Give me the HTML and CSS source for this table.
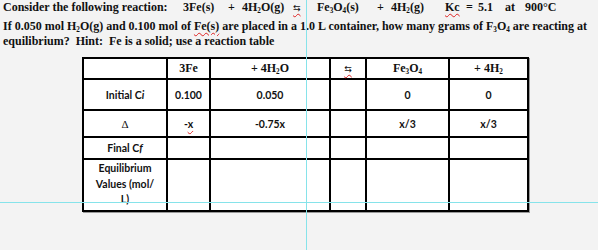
FILE: index.html
```html
<!DOCTYPE html>
<html>
<head>
<meta charset="utf-8">
<link rel="stylesheet" href="styles.css">
</head>
<body>
<div class="page">
  <div class="question">
    <div class="line1">
      <span class="w-lead">Consider the following reaction:</span>
      <span class="w-fe">3Fe(s)</span>
      <span class="w-plus1">+</span>
      <span class="w-h2o">4H<sub>2</sub>O(g)</span>
      <span class="w-arrow"><span class="eq">&#8646;</span></span>
      <span class="w-fe3o4">Fe<sub>3</sub>O<sub>4</sub>(s)</span>
      <span class="w-plus2">+</span>
      <span class="w-h2">4H<sub>2</sub>(g)</span>
      <span class="w-kc"><span class="squig">Kc</span></span>
      <span class="w-eq">=</span>
      <span class="w-val">5.1</span>
      <span class="w-at">at</span>
      <span class="w-temp">900&deg;C</span>
    </div>
    <p class="line2">If 0.050 mol H<sub>2</sub>O(g) and 0.100 mol of <span class="squig">Fe(s)</span> are placed in a 1.0 L container, how many grams of F<sub>3</sub>O<sub>4</sub> are reacting at<br>equilibrium?&nbsp; Hint:&nbsp; Fe is a solid; use a reaction table</p>
  </div>
  <table class="ice">
    <colgroup>
      <col class="c1"><col class="c2"><col class="c3"><col class="c4"><col class="c5"><col class="c6">
    </colgroup>
    <tr class="r-head">
      <td></td>
      <td class="serif">3Fe</td>
      <td class="serif">+ 4H<sub>2</sub>O</td>
      <td class="serif"><span class="eq">&#8646;</span></td>
      <td class="serif">Fe<sub>3</sub>O<sub>4</sub></td>
      <td class="serif">+ 4H<sub>2</sub></td>
    </tr>
    <tr class="r-init">
      <td>Initial C<i>i</i></td>
      <td>0.100</td>
      <td>0.050</td>
      <td></td>
      <td>0</td>
      <td>0</td>
    </tr>
    <tr class="r-delta">
      <td class="serif delta">&Delta;</td>
      <td>-<span class="squig">x</span></td>
      <td>-0.75x</td>
      <td></td>
      <td>x/3</td>
      <td>x/3</td>
    </tr>
    <tr class="r-final">
      <td>Final C<i>f</i></td>
      <td></td><td></td><td></td><td></td><td></td>
    </tr>
    <tr class="r-eq">
      <td class="multi">Equilibrium Values (mol/ L)</td>
      <td></td><td></td><td></td><td></td><td></td>
    </tr>
  </table>
  <div class="guide-v"></div>
  <div class="guide-h"></div>
</div>
</body>
</html>
```

FILE: styles.css
```css
html, body {
  margin: 0;
  padding: 0;
  background: #f3f3f3;
}
.page {
  position: relative;
  width: 598px;
  height: 250px;
  overflow: hidden;
  font-family: "Liberation Serif", "Times New Roman", serif;
  font-weight: bold;
  font-size: 12px;
  color: #111;
}
.question {
  padding: 0 0 0 3px;
}
.line1 {
  display: flex;
  align-items: baseline;
  height: 14px;
  line-height: 14px;
  white-space: nowrap;
}
.line1 > span {
  flex: none;
  display: inline-block;
}
.line1 sub, .line2 sub, .ice sub {
  font-size: 0.6em;
  vertical-align: -0.25em;
  line-height: 0;
}
.w-lead { width: 180px; }
.w-fe { width: 45px; }
.w-plus1 { width: 14px; }
.w-h2o { width: 51px; }
.w-arrow { width: 24px; }
.w-fe3o4 { width: 60px; }
.w-plus2 { width: 14px; }
.w-h2 { width: 54px; }
.w-kc { width: 21px; }
.w-eq { width: 12px; }
.w-val { width: 27px; }
.w-at { width: 20px; }
.w-temp { width: 40px; }
.eq {
  font-family: "DejaVu Sans", sans-serif;
  font-weight: normal;
  font-size: 9px;
  text-decoration: underline wavy #d22;
  text-decoration-thickness: 1px;
  text-underline-offset: 2px;
}
.squig {
  text-decoration: underline wavy #d22;
  text-decoration-thickness: 1px;
  text-underline-offset: 2px;
}
.line2 {
  margin: 5px 0 0 0;
  line-height: 15px;
  white-space: nowrap;
}
.ice {
  border-collapse: collapse;
  table-layout: fixed;
  margin: 8px 0 0 82px;
  width: 446px;
  background: #fff;
  font-family: Lato, "Open Sans", sans-serif;
  font-weight: bold;
  font-size: 10.5px;
  color: #111;
  box-shadow: 1px 1px 0 #999;
}
.ice td {
  border: 2px solid #000;
  text-align: center;
  vertical-align: middle;
  padding: 0 3px;
}
.ice td.serif {
  font-family: "Liberation Serif", "Times New Roman", serif;
  font-size: 12px;
}
.ice td.delta {
  font-weight: normal;
  font-size: 11px;
}
.c1 { width: 84px; }
.c2 { width: 43px; }
.c3 { width: 120px; }
.c4 { width: 36px; }
.c5 { width: 83px; }
.c6 { width: 79px; }
.r-head td { height: 19px; }
.r-init td { height: 29px; }
.r-delta td { height: 25px; }
.r-final td { height: 20px; }
.r-eq td { height: 49px; }
.ice td.multi {
  line-height: 15.5px;
  padding: 1px 10px 0;
  vertical-align: top;
}
.guide-v {
  position: absolute;
  left: 306px;
  top: 0;
  width: 1px;
  height: 250px;
  background: #86e3ea;
}
.guide-h {
  position: absolute;
  left: 0;
  top: 202px;
  width: 598px;
  height: 1px;
  background: #86e3ea;
}
```
